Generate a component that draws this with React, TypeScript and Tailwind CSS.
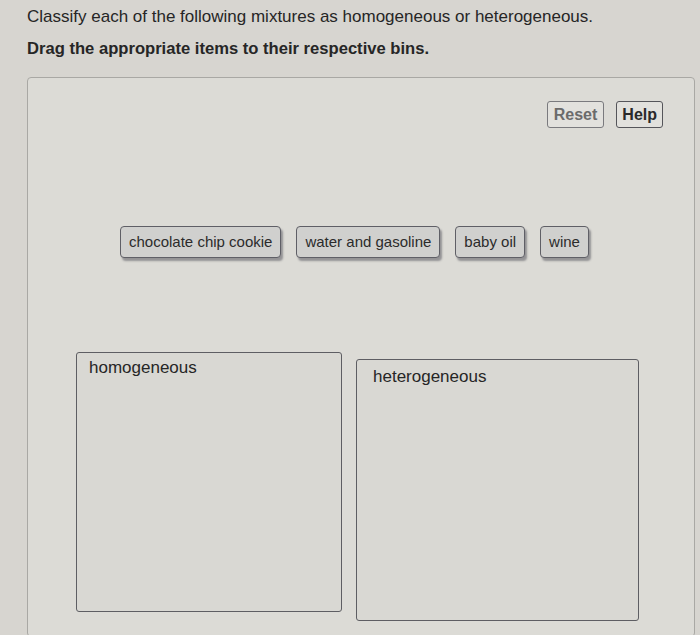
export default function App() {
  const items = ["chocolate chip cookie", "water and gasoline", "baby oil", "wine"];
  return (
    <div
      className="h-[635px] w-[700px] overflow-hidden bg-[#d7d5d0] text-[#262626]"
      style={{ fontFamily: '"Liberation Sans", Arial, sans-serif' }}
    >
      <div className="pl-[27px] pt-[7px]">
        <p className="text-[17px] leading-[20px]">Classify each of the following mixtures as homogeneous or heterogeneous.</p>
        <p className="mt-[12px] text-[16.6px] font-bold leading-[20px]">Drag the appropriate items to their respective bins.</p>

        <div className="mt-[18px] mr-[5px] flex h-[560px] flex-col rounded-[4px] border border-[#a9a8a4] bg-[#dcdbd6]">
          <div className="flex justify-end gap-[12px] pr-[31px] pt-[23px]">
            <button className="h-[27px] rounded-[3px] border border-[#7a7a7e] bg-[#e2e1dd] px-[6px] text-[16px] font-bold text-[#6b6b6b]">
              Reset
            </button>
            <button className="h-[27px] rounded-[3px] border-[1.5px] border-[#55555a] bg-[#e2e1dd] px-[5px] text-[16px] font-bold text-[#2a2a2a]">
              Help
            </button>
          </div>

          <div className="mt-[98px] flex gap-[15px] pl-[92px]">
            {items.map((t) => (
              <div
                key={t}
                className="h-[32px] rounded-[4px] border border-[#5f5f66] bg-[#d0d0ce] px-[8px] text-[15px] leading-[29px] text-[#2b2b2b] shadow-[2px_3px_2px_rgba(60,60,70,0.45)]"
              >
                {t}
              </div>
            ))}
          </div>

          <div className="mt-[94px] flex gap-[14px] pl-[48px]">
            <div className="h-[260px] w-[266px] rounded-[3px] border-[1.5px] border-[#5e5e63] bg-[#d9d8d3] px-[12px] pt-[3px]">
              <span className="text-[17px] leading-[20px]">homogeneous</span>
            </div>
            <div className="mt-[7px] h-[262px] w-[283px] rounded-[3px] border-[1.5px] border-[#5e5e63] bg-[#d9d8d3] px-[16px] pt-[5px]">
              <span className="text-[17px] leading-[20px]">heterogeneous</span>
            </div>
          </div>
        </div>
      </div>
    </div>
  );
}
